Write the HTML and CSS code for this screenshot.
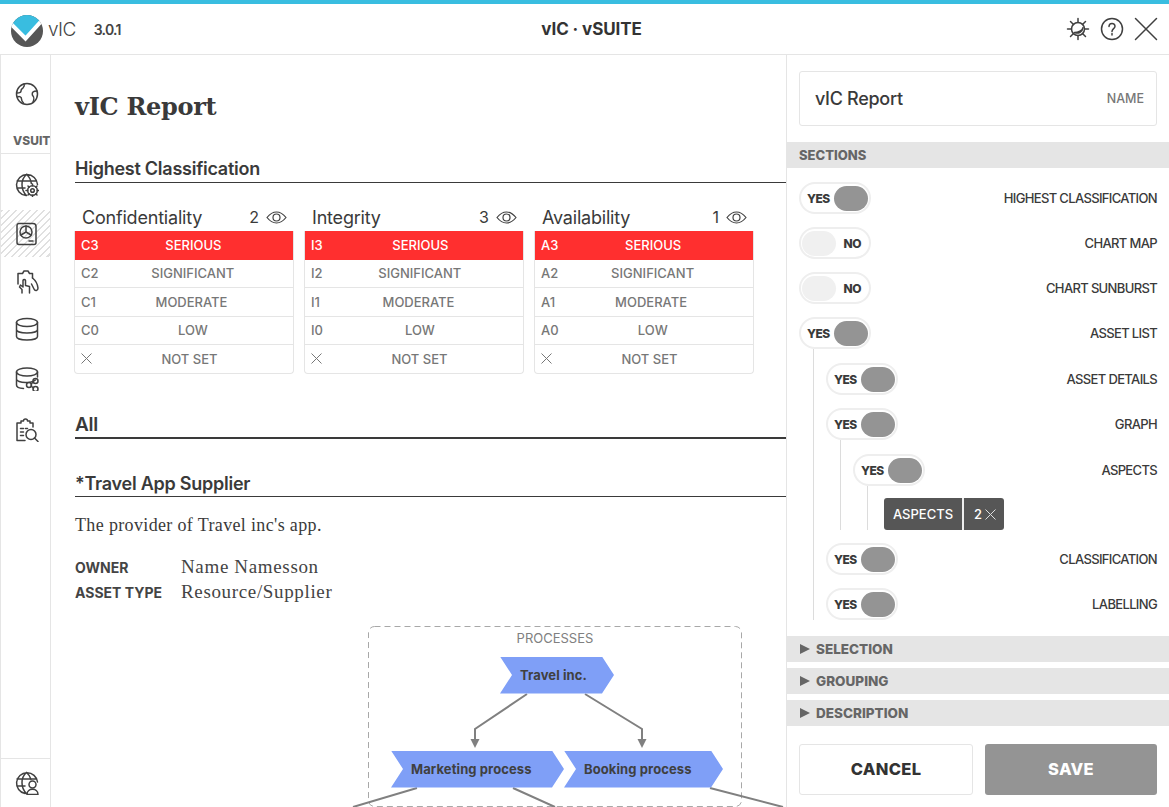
FILE: index.html
```html
<!DOCTYPE html>
<html lang="en">
<head>
<meta charset="utf-8">
<title>vIC - vSUITE</title>
<link rel="stylesheet" href="styles.css">
</head>
<body>
<div class="app">
  <div class="accent"></div>
  <header class="topbar">
    <div class="brand">
      <svg class="logo" viewBox="0 0 34 34" width="34" height="34">
        <defs><clipPath id="lc"><circle cx="17" cy="17" r="16"/></clipPath></defs>
        <g clip-path="url(#lc)">
          <rect width="34" height="34" fill="#565656"/>
          <polygon points="0,0 34,0 34,3 15.5,24 0,10" fill="#39bde0"/>
          <polyline points="0,9 15.5,24.5 35,3" fill="none" stroke="#fff" stroke-width="4"/>
        </g>
      </svg>
      <span class="brand-name">vIC</span>
      <span class="version">3.0.1</span>
    </div>
    <div class="app-title">vIC · vSUITE</div>
    <div class="top-actions">
      <svg width="24" height="24" viewBox="0 0 24 24" class="ico"><circle cx="12" cy="12" r="6.500"/><path d="M12 1.500v4M12 18.500v4M1.500 12h4M18.500 12h4M4.500 4.500l3 3M16.500 16.500l3 3M19.500 4.500l-3 3M7.500 16.500l-3 3M8.500 15.500c4 1.500 8-.5 8.500-5-.5 3-5 5-8.500 5z"/></svg>
      <svg width="24" height="24" viewBox="0 0 24 24" class="ico"><circle cx="12" cy="12" r="10.500"/><path d="M9 9.500c0-4 6-4 6-.3 0 2.500-3 2.500-3 5.300M12 16.500v1.500"/></svg>
      <svg width="24" height="24" viewBox="0 0 24 24" class="ico"><path d="M1.500 1.500l21 21M22.500 1.500l-21 21"/></svg>
    </div>
  </header>
  <div class="body">
    <nav class="sidebar">
      <div class="side-top">
        <div class="side-item first">
          <svg width="24" height="24" viewBox="0 0 24 24" class="ico"><circle cx="12" cy="12" r="10.500"/><path d="M9 2c1 2 0 3-1 4s-2 1-2 3-3 2-4 2M22 9c-2 0-3 0-4 1s-1 3 0 4 1 4 0 6M2.500 15c2-1 4 0 4 2s1 3 2 4"/></svg>
        </div>
        <div class="side-label">VSUITE</div>
      </div>
      <div class="side-group">
        <div class="side-item a">
          <svg width="24" height="24" viewBox="0 0 24 24" class="ico"><path d="M11 22.500a10.500 10.500 0 1 1 11.500-11M2 8h19M2 15h8M11.500 1.500c-6 5-6 15 0 21M11.500 1.500c3 2.500 4.500 6 4.800 9"/><circle cx="17.500" cy="17.500" r="1.800"/><circle cx="17.500" cy="17.500" r="4.800"/><path d="M17.500 11v1.700M17.500 22.300V24M11 17.500h1.700M22.300 17.500H24M13 13l1.200 1.200M20.800 20.800l1.200 1.200M22 13l-1.200 1.200M14.200 20.800L13 22"/></svg>
        </div>
        <div class="side-item active">
          <svg width="24" height="24" viewBox="0 0 24 24" class="ico"><path d="M4 1.500h14a3 3 0 0 1 3 3v16a2 2 0 0 1-2 2H4a2 2 0 0 1-2-2V3.500a2 2 0 0 1 2-2z"/><circle cx="11" cy="10" r="6"/><path d="M11 10V4M11 10l5 3M11 10l-5 3M14 19h4"/></svg>
        </div>
        <div class="side-item b">
          <svg width="24" height="24" viewBox="0 0 24 24" class="ico"><path d="M3 14V3.500h4.500L9 1h4l1.500 2.500h3V8"/><path d="M7 23v-3.500L4.500 17l1-2 2.500 2v-6.500a1.300 1.300 0 0 1 2.500 0v5l4 1V23"/><path d="M17.500 8c2.500 2 5 5.500 5.500 10 0 3-3 3.500-4 1l-2.500-5"/></svg>
        </div>
        <div class="side-item c">
          <svg width="24" height="24" viewBox="0 0 24 24" class="ico"><ellipse cx="12" cy="5.500" rx="10.500" ry="4"/><path d="M1.500 5.500v14c0 2 4.500 3.500 10.500 3.500s10.500-1.500 10.500-3.500v-14M1.500 12.500c0 2 4.500 3.500 10.500 3.500s10.500-1.500 10.500-3.500"/></svg>
        </div>
        <div class="side-item d">
          <svg width="24" height="24" viewBox="0 0 24 24" class="ico"><ellipse cx="12" cy="5" rx="10.500" ry="4"/><path d="M1.500 5v13c0 2 3 3.300 7 3.500M22.500 5v5M1.500 12c0 2 4 3.500 9 3.500 4 0 8-1 10-2.500"/><circle cx="20.500" cy="14" r="2.500"/><circle cx="14" cy="18" r="2.500"/><circle cx="20.500" cy="22" r="2.500"/><path d="M16 17l2.500-2M16 19l2.500 2"/></svg>
        </div>
        <div class="side-item e">
          <svg width="24" height="24" viewBox="0 0 24 24" class="ico"><path d="M10 22.500H2V5h4V3h2.500a2 2 0 0 1 4 0H15v2h3v4M5.500 10.500h3M10.500 10.500h2M5.500 14h3M5.500 17.500h3"/><circle cx="16" cy="16.500" r="5"/><path d="M19.500 20l3.500 3.500"/></svg>
        </div>
      </div>
      <div class="side-bottom">
        <svg width="24" height="24" viewBox="0 0 24 24" class="ico"><path d="M10 22.500A10.500 10.500 0 1 1 22.500 11M2 8h19M2 15h8M11.500 1.500c-6 5-6 15 0 21M11.500 1.500c3 2.500 4 5 4.500 7"/><circle cx="17.500" cy="13.500" r="3.500"/><path d="M12 23.500c0-7 11-7 11 0z"/></svg>
      </div>
    </nav>
    <main class="main">
      <h1 class="report-title">vIC Report</h1>
      <h2 class="section-head top">Highest Classification</h2>
      <div class="cards">
        <section class="card">
          <div class="card-head"><span class="card-title">Confidentiality</span><span class="card-count">2<svg class="eye" width="21" height="13" viewBox="0 0 21 13"><path d="M1 6.500C5 1.500 8 1 10.500 1S16 1.500 20 6.500C16 11.500 13 12 10.500 12S5 11.500 1 6.500z"/><circle cx="10.500" cy="6.500" r="3.500"/></svg></span></div>
          <div class="levels">
            <div class="lvl on"><span class="code">C3</span><span class="name">SERIOUS</span></div>
            <div class="lvl"><span class="code">C2</span><span class="name">SIGNIFICANT</span></div>
            <div class="lvl"><span class="code">C1</span><span class="name">MODERATE</span></div>
            <div class="lvl"><span class="code">C0</span><span class="name">LOW</span></div>
            <div class="lvl"><span class="code"><svg class="x" width="11" height="11" viewBox="0 0 11 11"><path d="M.5.500l10 10M10.500.500l-10 10"/></svg></span><span class="name">NOT SET</span></div>
          </div>
        </section>
        <section class="card">
          <div class="card-head"><span class="card-title">Integrity</span><span class="card-count">3<svg class="eye" width="21" height="13" viewBox="0 0 21 13"><path d="M1 6.500C5 1.500 8 1 10.500 1S16 1.500 20 6.500C16 11.500 13 12 10.500 12S5 11.500 1 6.500z"/><circle cx="10.500" cy="6.500" r="3.500"/></svg></span></div>
          <div class="levels">
            <div class="lvl on"><span class="code">I3</span><span class="name">SERIOUS</span></div>
            <div class="lvl"><span class="code">I2</span><span class="name">SIGNIFICANT</span></div>
            <div class="lvl"><span class="code">I1</span><span class="name">MODERATE</span></div>
            <div class="lvl"><span class="code">I0</span><span class="name">LOW</span></div>
            <div class="lvl"><span class="code"><svg class="x" width="11" height="11" viewBox="0 0 11 11"><path d="M.5.500l10 10M10.500.500l-10 10"/></svg></span><span class="name">NOT SET</span></div>
          </div>
        </section>
        <section class="card">
          <div class="card-head"><span class="card-title">Availability</span><span class="card-count">1<svg class="eye" width="21" height="13" viewBox="0 0 21 13"><path d="M1 6.500C5 1.500 8 1 10.500 1S16 1.500 20 6.500C16 11.500 13 12 10.500 12S5 11.500 1 6.500z"/><circle cx="10.500" cy="6.500" r="3.500"/></svg></span></div>
          <div class="levels">
            <div class="lvl on"><span class="code">A3</span><span class="name">SERIOUS</span></div>
            <div class="lvl"><span class="code">A2</span><span class="name">SIGNIFICANT</span></div>
            <div class="lvl"><span class="code">A1</span><span class="name">MODERATE</span></div>
            <div class="lvl"><span class="code">A0</span><span class="name">LOW</span></div>
            <div class="lvl"><span class="code"><svg class="x" width="11" height="11" viewBox="0 0 11 11"><path d="M.5.500l10 10M10.500.500l-10 10"/></svg></span><span class="name">NOT SET</span></div>
          </div>
        </section>
      </div>
      <h2 class="section-head all">All</h2>
      <h2 class="section-head asset">*Travel App Supplier</h2>
      <p class="desc">The provider of Travel inc's app.</p>
      <dl class="meta">
        <div class="meta-row"><dt>OWNER</dt><dd>Name Namesson</dd></div>
        <div class="meta-row"><dt>ASSET TYPE</dt><dd>Resource/Supplier</dd></div>
      </dl>
      <div class="diagram">
        <svg class="edges" width="440" height="181" viewBox="0 0 440 181">
          <rect class="frame" x="0.500" y="0.500" width="373" height="180" rx="6"/>
          <path d="M159 68L107 103V116M217 68L274 103V116"/>
          <polygon points="102.500,113 111.500,113 107,122" class="head"/>
          <polygon points="269.500,113 278.500,113 274,122" class="head"/>
          <path d="M49 162L-15 181M145 162L187 181M342 162L415 181"/>
        </svg>
        <div class="group"><span class="group-label">PROCESSES</span></div>
        <div class="node n1">Travel inc.</div>
        <div class="node n2">Marketing process</div>
        <div class="node n3">Booking process</div>
      </div>
    </main>
    <aside class="panel">
      <div class="name-box"><span class="name-val">vIC Report</span><span class="name-key">NAME</span></div>
      <div class="bar">SECTIONS</div>
      <div class="rows">
        <div class="row"><div class="tog yes"><span>YES</span><i></i></div><span class="lab">HIGHEST CLASSIFICATION</span></div>
        <div class="row"><div class="tog no"><i></i><span>NO</span></div><span class="lab">CHART MAP</span></div>
        <div class="row"><div class="tog no"><i></i><span>NO</span></div><span class="lab">CHART SUNBURST</span></div>
        <div class="row flush"><div class="tog yes"><span>YES</span><i></i></div><span class="lab">ASSET LIST</span></div>
        <div class="tree">
          <div class="row"><div class="tog yes"><span>YES</span><i></i></div><span class="lab">ASSET DETAILS</span></div>
          <div class="row flush"><div class="tog yes"><span>YES</span><i></i></div><span class="lab">GRAPH</span></div>
          <div class="tree gap-b">
            <div class="row flush"><div class="tog yes"><span>YES</span><i></i></div><span class="lab">ASPECTS</span></div>
            <div class="tree chip-tree">
              <div class="chip"><span class="chip-name">ASPECTS</span><span class="chip-num">2<svg class="x chip-x" width="11" height="11" viewBox="0 0 11 11"><path d="M.5.500l10 10M10.500.500l-10 10"/></svg></span></div>
            </div>
          </div>
          <div class="row"><div class="tog yes"><span>YES</span><i></i></div><span class="lab">CLASSIFICATION</span></div>
          <div class="row flush"><div class="tog yes"><span>YES</span><i></i></div><span class="lab">LABELLING</span></div>
        </div>
      </div>
      <div class="bars">
        <div class="bar sub"><b class="tri"></b>SELECTION</div>
        <div class="bar sub"><b class="tri"></b>GROUPING</div>
        <div class="bar sub"><b class="tri"></b>DESCRIPTION</div>
      </div>
      <div class="buttons">
        <button class="btn cancel">CANCEL</button>
        <button class="btn save">SAVE</button>
      </div>
    </aside>
  </div>
</div>
</body>
</html>
```
FILE: styles.css
```css
* { box-sizing: border-box; }
html, body { margin: 0; height: 100%; overflow: hidden; background: #fff; }
body { font-family: Inter, "Liberation Sans", sans-serif; color: #3a3a3a; }
.app { height: 807px; display: flex; flex-direction: column; overflow: hidden; }
.accent { height: 4px; background: #39bde0; flex: none; }

.ico { fill: none; stroke: #404040; stroke-width: 1.5; display: block; stroke-linecap: round; stroke-linejoin: round; }

.topbar { height: 51px; flex: none; border-bottom: 1px solid #e5e5e5; display: grid; grid-template-columns: 1fr auto 1fr; align-items: center; padding: 0 11px 0 10px; }
.brand { display: flex; align-items: center; }
.logo { display: block; margin-top: 3px; }
.brand-name { font-size: 19px; font-weight: 300; margin-left: 4px; color: #444; letter-spacing: -.6px; }
.version { font-size: 14px; font-weight: 600; margin-left: 18px; color: #444; letter-spacing: -.7px; }
.app-title { font-size: 17px; font-weight: 700; letter-spacing: -.1px; color: #333; margin-left: 15px; }
.top-actions { display: flex; align-items: center; gap: 10px; justify-content: flex-end; }

.body { flex: 1; display: flex; min-height: 0; }
.sidebar { width: 51px; flex: none; border-left: 1px solid #e5e5e5; border-right: 1px solid #e5e5e5; display: flex; flex-direction: column; overflow: hidden; }
.side-top { height: 99px; border-bottom: 1px solid #e5e5e5; flex: none; }
.side-item { display: flex; justify-content: center; align-items: center; padding-left: 3px; }
.side-item.first { height: 77px; }
.side-label { font-size: 12px; font-weight: 800; color: #666; padding-left: 12px; white-space: nowrap; line-height: 17px; }
.side-group { flex: 1; }
.side-item.a { height: 56px; padding-top: 6px; }
.side-item.active { height: 47px; background: repeating-linear-gradient(135deg, #e0e0e0 0 1.500px, #fff 1.500px 5px); }
.side-item.b { height: 50px; }
.side-item.c { height: 44px; }
.side-item.d { height: 55px; }
.side-item.e { height: 47px; }
.side-bottom { height: 49px; border-top: 1px solid #e5e5e5; display: flex; justify-content: center; align-items: center; flex: none; padding-left: 3px; }

.main { width: 735px; flex: none; padding: 0 0 0 24px; overflow: hidden; }
.report-title { font-family: "DejaVu Serif", serif; font-weight: 700; font-size: 24px; margin: 37px 0 0; line-height: 30px; color: #3a3a3a; letter-spacing: -.3px; }
.section-head { margin: 0; font-size: 18px; font-weight: 600; line-height: 24px; border-bottom: 1px solid #3a3a3a; color: #3a3a3a; letter-spacing: -.25px; }
.section-head.top { margin-top: 34px; padding: 1px 0; }
.cards { display: flex; gap: 10px; margin-top: 22px; margin-left: -1px; }
.card { width: 220px; }
.card-head { display: flex; justify-content: space-between; align-items: center; height: 26px; padding: 0 7px 2px 8px; }
.card-title { font-size: 18px; color: #3a3a3a; letter-spacing: -.2px; }
.card-count { font-size: 16px; display: flex; align-items: center; gap: 7px; }
.eye { fill: none; stroke: #404040; stroke-width: 1.2; display: block; }
.levels { border: 1px solid #e5e5e5; border-top: 0; border-radius: 0 0 4px 4px; overflow: hidden; }
.lvl { height: 28.500px; display: flex; align-items: center; border-bottom: 1px solid #e5e5e5; font-size: 13px; font-weight: 500; color: #777; padding: 0 6px; }
.lvl:last-child { border-bottom: 0; height: 27.500px; }
.lvl.on { background: #ff2f2f; color: #fff; border-bottom: 0; margin: 0 -1px; padding: 0 6px 0 7px; }
.code { flex: none; }
.name { flex: 1; text-align: center; }
.x { fill: none; stroke: #777; stroke-width: 1; display: block; }

.section-head.all { margin-top: 39px; font-size: 19px; border-bottom-width: 2px; }
.section-head.asset { margin-top: 33px; }
.desc { font-family: "Liberation Serif", serif; font-size: 18px; letter-spacing: .35px; margin: 17px 0 0; line-height: 22px; color: #3a3a3a; }
.meta { margin: 19px 0 0; }
.meta-row { display: flex; height: 25px; align-items: center; }
.meta-row dt { width: 106px; font-size: 14px; font-weight: 700; color: #444; }
.meta-row dd { margin: 0; font-family: "Liberation Serif", serif; font-size: 19px; letter-spacing: .65px; color: #444; }

.diagram { position: relative; margin-left: 293px; margin-top: 21px; width: 440px; height: 181px; }
.edges { position: absolute; left: 0; top: 0; overflow: visible; fill: none; stroke: #808080; stroke-width: 2; }
.edges .head { fill: #808080; stroke: none; }
.edges .frame { stroke: #a8a8a8; stroke-width: 1; stroke-dasharray: 6 4; }
.group { position: absolute; left: 0; top: 0; width: 374px; text-align: center; }
.group-label { font-size: 13px; color: #808080; display: block; margin-top: 4px; line-height: 17px; }
.node { position: absolute; height: 37px; background: #7f9ff7; display: flex; align-items: center; font-size: 13px; font-weight: 700; letter-spacing: .1px; color: #404040; clip-path: polygon(0 0, calc(100% - 12px) 0, 100% 50%, calc(100% - 12px) 100%, 0 100%, 12px 50%); }
.n1 { left: 132px; top: 31px; width: 114px; padding-left: 20px; }
.n2 { left: 23px; top: 125px; width: 173px; padding-left: 20px; }
.n3 { left: 196px; top: 125px; width: 159px; padding-left: 20px; }

.panel { flex: 1; border-left: 1px solid #e5e5e5; display: flex; flex-direction: column; min-width: 0; }
.name-box { margin: 16px 12px 0; height: 55px; border: 1px solid #e5e5e5; border-radius: 3px; display: flex; align-items: center; justify-content: space-between; padding: 0 12px 0 15px; flex: none; }
.name-val { font-size: 18px; font-weight: 500; color: #3a3a3a; letter-spacing: -.3px; }
.name-key { font-size: 12.500px; font-weight: 500; color: #777; }
.bar { height: 26px; background: #e5e5e5; font-size: 13px; font-weight: 800; color: #666; display: flex; align-items: center; padding-left: 12px; margin-top: 16px; flex: none; }
.rows { padding: 14px 12px 0 12px; }
.row { height: 32px; display: flex; align-items: center; justify-content: space-between; margin-bottom: 13px; }
.row.flush { margin-bottom: 0; }
.lab { font-size: 13px; font-weight: 500; color: #3a3a3a; letter-spacing: -.65px; }
.tog { width: 72px; height: 32px; border: 2px solid #eee; border-radius: 16px; display: flex; align-items: center; justify-content: space-between; background: #fff; font-size: 12px; font-weight: 800; letter-spacing: -.5px; color: #3a3a3a; }
.tog.yes { padding: 0 1px 0 6px; }
.tog.no { padding: 0 8px 0 1px; }
.tog i { width: 34px; height: 25px; border-radius: 13px; display: block; }
.tog.yes i { background: #949494; }
.tog.no i { background: #f0f0f0; }
.tree { margin-left: 14px; padding: 14px 0 0 12px; border-left: 1px solid #dcdcdc; }
.tree.gap-b { margin-bottom: 13px; }
.chip-tree { padding: 12px 0 0 16px; }
.chip { width: 120px; height: 32px; background: #565656; color: #fff; border-radius: 3px; display: flex; font-size: 13px; font-weight: 500; align-items: center; overflow: hidden; }
.chip-name { width: 80px; height: 100%; display: flex; align-items: center; justify-content: center; border-right: 2px solid #eee; flex: none; }
.chip-num { display: flex; align-items: center; gap: 3px; padding-left: 10px; }
.chip-x { stroke: #ddd; }

.bars { margin-top: 16px; display: flex; flex-direction: column; gap: 6px; }
.bars .bar { margin-top: 0; font-size: 13.500px; }
.tri { width: 0; height: 0; border-left: 10px solid #666; border-top: 5px solid transparent; border-bottom: 5px solid transparent; margin: 0 6px 0 1px; }
.buttons { display: flex; gap: 12px; padding: 18px 12px 0; }
.btn { height: 51px; font: 800 16.500px Inter, sans-serif; letter-spacing: .3px; border-radius: 3px; cursor: pointer; padding: 0 0 2px; }
.cancel { width: 174px; background: #fff; border: 1px solid #e5e5e5; color: #333; }
.save { flex: 1; background: #949494; border: 0; color: #fff; }
```
